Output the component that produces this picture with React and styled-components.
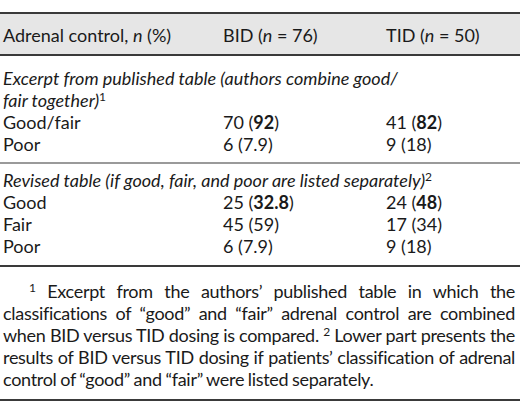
import React from "react"
import styled, { createGlobalStyle } from "styled-components"

const GlobalStyle = createGlobalStyle`
  body {
    margin: 0;
    background: #fff;
    font-family: Lato, "Open Sans", sans-serif;
    color: #1a1a1a;
  }
`

const sections = [
  {
    title: (
      <>
        Excerpt from published table (authors combine good/
        <br />
        fair together)<sup>1</sup>
      </>
    ),
    rows: [
      ["Good/fair", "70", "92", true, "41", "82", true],
      ["Poor", "6", "7.9", false, "9", "18", false],
    ],
  },
  {
    title: (
      <>
        Revised table (if good, fair, and poor are listed separately)<sup>2</sup>
      </>
    ),
    rows: [
      ["Good", "25", "32.8", true, "24", "48", true],
      ["Fair", "45", "59", false, "17", "34", false],
      ["Poor", "6", "7.9", false, "9", "18", false],
    ],
  },
]

const Value = ({ n, pct, bold }) => (
  <>
    {n} ({bold ? <b>{pct}</b> : pct})
  </>
)

export default function App() {
  return (
    <>
      <GlobalStyle />
      <Wrapper>
        <Table>
          <thead>
            <HeadRow>
              <HeadCell>
                Adrenal control, <i>n</i> (%)
              </HeadCell>
              <HeadCell>
                BID (<i>n</i> = 76)
              </HeadCell>
              <HeadCell>
                TID (<i>n</i> = 50)
              </HeadCell>
            </HeadRow>
          </thead>
          {sections.map((section, i) => (
            <Section key={i} $last={i === sections.length - 1}>
              <tr>
                <TitleCell colSpan={3}>{section.title}</TitleCell>
              </tr>
              {section.rows.map((r, j) => (
                <tr key={j}>
                  <Cell>{r[0]}</Cell>
                  <Cell>
                    <Value n={r[1]} pct={r[2]} bold={r[3]} />
                  </Cell>
                  <Cell>
                    <Value n={r[4]} pct={r[5]} bold={r[6]} />
                  </Cell>
                </tr>
              ))}
            </Section>
          ))}
        </Table>
        <Footnote>
          <sup>1</sup> Excerpt from the authors’ published table in which the
          classifications of “good” and “fair” adrenal control are combined
          when BID versus TID dosing is compared. <sup>2</sup> Lower part
          presents the results of BID versus TID dosing if patients’
          classification of adrenal control of “good” and “fair” were listed
          separately.
        </Footnote>
      </Wrapper>
    </>
  )
}

const Wrapper = styled.div`
  width: 520px;
  padding-top: 12px;
`

const Table = styled.table`
  width: 520px;
  border-collapse: collapse;
  font-size: 18px;
  line-height: 22px;
  border-top: 2px solid #3a3a3a;

  sup {
    font-size: 12px;
    font-style: normal;
    line-height: 0;
    vertical-align: 6px;
  }
`

const HeadRow = styled.tr`
  background: #e6e6e6;
  border-bottom: 2px solid #3a3a3a;
`

const HeadCell = styled.th`
  text-align: left;
  font-weight: normal;
  padding: 10px 0 8px 3px;

  &:nth-child(1) {
    width: 217px;
  }
  &:nth-child(2) {
    width: 160px;
  }
`

const Section = styled.tbody`
  border-bottom: 2px solid ${(p) => (p.$last ? "#3a3a3a" : "#9a9a9a")};

  tr:first-child td {
    padding-top: ${(p) => (p.$last ? "5px" : "11px")};
  }
  tr:last-child td {
    padding-bottom: ${(p) => (p.$last ? "8px" : "7px")};
  }
`

const TitleCell = styled.td`
  font-style: italic;
  padding: 0 0 0 3px;
`

const Cell = styled.td`
  padding: 0 0 0 3px;
  white-space: nowrap;
`

const Footnote = styled.p`
  margin: 0;
  padding: 13px 5px 9px 3px;
  font-size: 18px;
  line-height: 22px;
  letter-spacing: -0.3px;
  word-spacing: -0.6px;
  text-align: justify;
  text-indent: 26px;
  border-bottom: 2px solid #3a3a3a;

  sup {
    font-size: 12px;
    line-height: 0;
    vertical-align: 6px;
  }
`
